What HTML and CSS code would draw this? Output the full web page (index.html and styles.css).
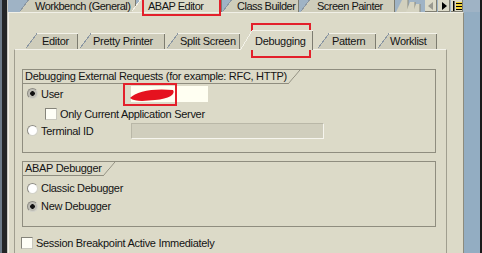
FILE: index.html
```html
<!DOCTYPE html>
<html lang="en">
<head>
  <meta charset="UTF-8" />
  <title>ABAP Editor - Debugging</title>
  <link rel="stylesheet" href="styles.css">
</head>
<body>

<div class="screen">
  <div class="edge-left"></div>

  <div class="main">
    <div class="top-row">
      <div class="top-tabs">
        <span class="ttab t-workbench">Workbench (General)</span>
        <span class="ttab active t-editor">ABAP Editor</span>
        <span class="ttab t-class">Class Builder</span>
        <span class="ttab t-screen">Screen Painter</span>
        <span class="stubs">
          <svg width="26" height="12" viewBox="0 0 26 12">
            <polygon points="0,12 6,0 12,0 12,12" fill="#d2d0be"/>
            <line x1="12" y1="0" x2="12" y2="12" stroke="#8b8a7c"/>
            <polygon points="10,12 14,2 19,2 19,12" fill="#d6d4c2"/>
            <line x1="19" y1="2" x2="19" y2="12" stroke="#8b8a7c"/>
            <polygon points="17,12 20,4 24,4 24,12" fill="#d6d4c2"/>
            <line x1="24" y1="4" x2="24" y2="12" stroke="#8b8a7c"/>
          </svg>
        </span>
      </div>
      <div class="scroll-btns">
        <span class="sbtn">
          <svg width="12" height="12" viewBox="0 0 12 12"><polygon points="8,2 3,6 8,10" fill="#9a9a90"/></svg>
        </span>
        <span class="sbtn">
          <svg width="12" height="12" viewBox="0 0 12 12"><polygon points="4,2 9,6 4,10" fill="#000"/></svg>
        </span>
        <span class="sbtn">
          <svg width="12" height="12" viewBox="0 0 12 12">
            <rect x="2" y="1" width="1.5" height="10" fill="#000"/>
            <rect x="5" y="2" width="6" height="8" fill="#f2d43a"/>
            <rect x="5" y="3" width="6" height="1" fill="#000"/>
            <rect x="5" y="6" width="6" height="1" fill="#000"/>
            <rect x="5" y="9" width="6" height="1" fill="#000"/>
          </svg>
        </span>
      </div>
    </div>

    <div class="body-row">
      <div class="panel">
        <div class="itabs">
          <span class="itab i-editor">Editor</span>
          <span class="itab i-pretty">Pretty Printer</span>
          <span class="itab i-split">Split Screen</span>
          <span class="itab active i-debug">Debugging</span>
          <span class="itab i-pattern">Pattern</span>
          <span class="itab i-work">Worklist</span>
        </div>

        <div class="page">
          <div class="group group-ext">
            <div class="group-title"><span>Debugging External Requests (for example: RFC, HTTP)</span></div>
            <div class="row first">
              <span class="opt"><span class="radio on"></span>User</span>
              <span class="field user-field"></span>
            </div>
            <div class="row check-row">
              <span class="check"></span>Only Current Application Server
            </div>
            <div class="row">
              <span class="opt"><span class="radio"></span>Terminal ID</span>
              <span class="field off"></span>
            </div>
          </div>

          <div class="group group-dbg">
            <div class="group-title"><span>ABAP Debugger</span></div>
            <div class="row first">
              <span class="opt"><span class="radio"></span>Classic Debugger</span>
            </div>
            <div class="row">
              <span class="opt"><span class="radio on"></span>New Debugger</span>
            </div>
          </div>

          <div class="session">
            <span class="check"></span>Session Breakpoint Active Immediately
          </div>
        </div>
      </div>
      <div class="right-strip"></div>
    </div>
  </div>

  <div class="edge-right"></div>

  <!-- red marks drawn on top of the screenshot -->
  <div class="mark mark-tab"></div>
  <div class="mark mark-debug"></div>
  <div class="mark mark-user"></div>
  <svg class="scribble" width="48" height="16" viewBox="0 0 48 16">
    <path d="M2,11 C8,4 26,1 45,3 C48,7 41,12 27,13 C17,14 7,15 2,11 Z" fill="#e5121f"/>
  </svg>
</div>

</body>
</html>
```

FILE: styles.css
```css
:root {
  --beige: #dcdac8;
  --tab: #cfcdbb;
  --tab-edge: #8a96a2;
  --line: #8f8d7f;
  --blue: #9fb3c5;
  --strip: #93adc2;
  --red: #e3202b;
}

body {
  margin: 0;
  background-color: #1d1d1d;
  font-family: 'Liberation Sans', Arial, sans-serif;
  font-size: 11px;
  letter-spacing: -0.3px;
  color: #141414;
}

.screen {
  position: relative;
  display: flex;
  width: 482px;
  height: 253px;
  overflow: hidden;
}

.edge-left {
  flex-shrink: 0;
  width: 8px;
  background: linear-gradient(90deg, #6c7a88 0 2px, #232526 2px 7px, #c9c9c0 7px 8px);
}

.edge-right {
  flex-shrink: 0;
  width: 2px;
  background-color: #1a1a1a;
}

.main {
  flex: 1;
  min-width: 0;
  display: flex;
  flex-direction: column;
  background-color: var(--blue);
}

/* top tab strip */
.top-row {
  flex-shrink: 0;
  height: 12px;
  display: flex;
  align-items: flex-end;
  padding-right: 17px;
  overflow: hidden;
}

.top-tabs {
  flex: 1;
  min-width: 0;
  display: flex;
  align-items: flex-end;
  padding-left: 12px;
}

.ttab,
.itab {
  display: block;
  flex-shrink: 0;
  box-sizing: border-box;
  white-space: nowrap;
  background:
    linear-gradient(#f3f2e9, #f3f2e9) 11px 0 / 100% 1px no-repeat,
    linear-gradient(#7d7c70, #7d7c70) right 0 / 1px 100% no-repeat,
    linear-gradient(to bottom right, transparent calc(50% - 1px), var(--tab-edge) calc(50% - 1px), var(--tab-edge) 50%, var(--tab) 50%) 0 0 / 12px 100% no-repeat,
    linear-gradient(var(--tab), var(--tab)) 12px 0 / 100% 100% no-repeat;
}

.ttab {
  height: 16px;
  line-height: 20px;
  padding-left: 16px;
  letter-spacing: -0.5px;
}

.ttab.active,
.itab.active {
  position: relative;
  background:
    linear-gradient(#f3f2e9, #f3f2e9) 11px 0 / 100% 1px no-repeat,
    linear-gradient(#7d7c70, #7d7c70) right 0 / 1px 100% no-repeat,
    linear-gradient(to bottom right, transparent calc(50% - 1px), #f3f2e9 calc(50% - 1px), #f3f2e9 50%, var(--beige) 50%) 0 0 / 12px 100% no-repeat,
    linear-gradient(var(--beige), var(--beige)) 12px 0 / 100% 100% no-repeat;
}

.t-workbench { width: 116px; padding-left: 15px; }
.t-editor    { width: 90px; margin-left: -4px; }
.t-class     { width: 76px; margin-left: 1px; padding-left: 14px; }
.t-screen    { width: 94px; margin-left: 2px; }

.stubs {
  display: block;
  flex-shrink: 0;
  height: 12px;
  margin-left: 1px;
}

.stubs svg {
  display: block;
}

.scroll-btns {
  display: flex;
  flex-shrink: 0;
  gap: 1px;
}

.sbtn {
  display: block;
  width: 12px;
  height: 12px;
  background-color: #dcdac8;
  box-shadow: inset -1px -1px 0 #7f7e72;
}

.sbtn svg {
  display: block;
}

/* panel below the top strip */
.body-row {
  flex: 1;
  min-height: 0;
  display: flex;
}

.panel {
  flex-shrink: 0;
  width: 456px;
  box-sizing: border-box;
  background-color: var(--beige);
  border-left: 1px solid #f1f0e7;
  border-top: 1px solid #f1f0e7;
  border-right: 1px solid #8c8b7d;
  padding: 16px 16px 0 5px;
}

.right-strip {
  flex: 1;
  background-color: var(--strip);
}

/* inner tab strip */
.itabs {
  display: flex;
  align-items: flex-end;
  height: 20px;
  padding-left: 12px;
}

.itab {
  height: 16px;
  line-height: 17px;
  padding-left: 14px;
}

.itab.active {
  z-index: 1;
  height: 20px;
  margin-bottom: -1px;
  line-height: 23px;
}

.i-editor  { width: 52px; padding-left: 16px; }
.i-pretty  { width: 85px; margin-left: 2px; padding-left: 13px; }
.i-split   { width: 73px; margin-left: 2px; padding-left: 13px; }
.i-debug   { width: 72px; margin-left: 1px; }
.i-pattern { width: 58px; margin-left: 5px; }
.i-work    { width: 59px; margin-left: 2px; padding-left: 12px; }

.page {
  height: 220px;
  border-left: 1px solid #a09e8f;
  border-top: 1px solid #f3f2ea;
  border-right: 1px solid #a09e8f;
  padding: 19px 10px 0 7px;
}

/* group boxes */
.group {
  box-sizing: border-box;
  border: 1px solid var(--line);
}

.group-ext {
  height: 84px;
}

.group-dbg {
  height: 66px;
  margin-top: 8px;
}

.group-title {
  display: flex;
  height: 13px;
}

.group-title span {
  height: 13px;
  line-height: 12px;
  padding: 0 1px 0 2px;
  border-bottom: 1px solid var(--line);
}

.group-title::after {
  content: "";
  width: 12px;
  height: 14px;
  background: linear-gradient(to bottom right, transparent calc(50% - 0.7px), var(--line) 50%, transparent calc(50% + 0.7px));
}

.row {
  display: flex;
  align-items: center;
  height: 17px;
  padding-left: 4px;
}

.row.first {
  margin-top: 2px;
}

.group-dbg .row {
  height: 18px;
}

.group-dbg .row.first {
  margin-top: 4px;
}

.opt {
  display: flex;
  align-items: center;
  width: 104px;
}

.radio {
  width: 9px;
  height: 9px;
  margin-right: 3px;
  border-radius: 50%;
  border: 1px solid #8d8c84;
  border-right-color: #d2d1c8;
  border-bottom-color: #d2d1c8;
  background-color: #fff;
}

.radio.on {
  background: radial-gradient(circle, #111 0 2px, #bdbcb4 2.6px);
}

.check {
  width: 10px;
  height: 10px;
  margin-right: 3px;
  border: 1px solid #85847a;
  border-right-color: #c9c8be;
  border-bottom-color: #c9c8be;
  background-color: #fefef6;
}

.check-row {
  height: 16px;
  margin-top: 4px;
  padding-left: 22px;
}

.field {
  height: 16px;
  box-sizing: border-box;
}

.user-field {
  width: 77px;
  background-color: #fffff2;
}

.field.off {
  width: 193px;
  background-color: #d0cebd;
  border: 1px solid #f6f5ee;
  border-top-color: #b9b7a7;
  border-left-color: #b9b7a7;
}

.session {
  display: flex;
  align-items: center;
  height: 13px;
  margin: 9px 0 0 -1px;
}

/* red annotation marks */
.mark {
  position: absolute;
  box-sizing: border-box;
  border: 2px solid var(--red);
}

.mark-tab {
  left: 142px;
  top: -3px;
  width: 79px;
  height: 19px;
}

.mark-debug {
  left: 251px;
  top: 23px;
  width: 60px;
  height: 35px;
}

.mark-user {
  left: 123px;
  top: 83px;
  width: 54px;
  height: 23px;
}

.scribble {
  position: absolute;
  left: 128px;
  top: 87px;
}
```
